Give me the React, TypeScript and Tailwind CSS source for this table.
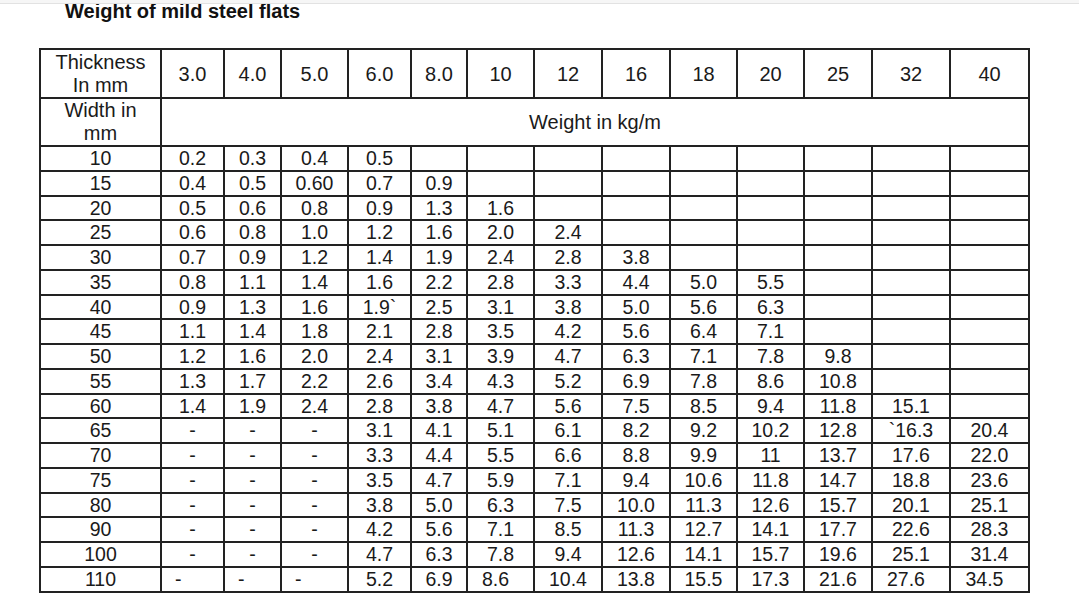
const thicknesses = ["3.0", "4.0", "5.0", "6.0", "8.0", "10", "12", "16", "18", "20", "25", "32", "40"]

const colWidths = [121, 63, 57, 67, 63, 56, 67, 68, 68, 67, 67, 68, 78, 79]

// width in mm -> weights per thickness (blank where the size isn't made)
const rows: [string, string[]][] = [
    ["10", ["0.2", "0.3", "0.4", "0.5"]],
    ["15", ["0.4", "0.5", "0.60", "0.7", "0.9"]],
    ["20", ["0.5", "0.6", "0.8", "0.9", "1.3", "1.6"]],
    ["25", ["0.6", "0.8", "1.0", "1.2", "1.6", "2.0", "2.4"]],
    ["30", ["0.7", "0.9", "1.2", "1.4", "1.9", "2.4", "2.8", "3.8"]],
    ["35", ["0.8", "1.1", "1.4", "1.6", "2.2", "2.8", "3.3", "4.4", "5.0", "5.5"]],
    ["40", ["0.9", "1.3", "1.6", "1.9`", "2.5", "3.1", "3.8", "5.0", "5.6", "6.3"]],
    ["45", ["1.1", "1.4", "1.8", "2.1", "2.8", "3.5", "4.2", "5.6", "6.4", "7.1"]],
    ["50", ["1.2", "1.6", "2.0", "2.4", "3.1", "3.9", "4.7", "6.3", "7.1", "7.8", "9.8"]],
    ["55", ["1.3", "1.7", "2.2", "2.6", "3.4", "4.3", "5.2", "6.9", "7.8", "8.6", "10.8"]],
    ["60", ["1.4", "1.9", "2.4", "2.8", "3.8", "4.7", "5.6", "7.5", "8.5", "9.4", "11.8", "15.1"]],
    ["65", ["-", "-", "-", "3.1", "4.1", "5.1", "6.1", "8.2", "9.2", "10.2", "12.8", "`16.3", "20.4"]],
    ["70", ["-", "-", "-", "3.3", "4.4", "5.5", "6.6", "8.8", "9.9", "11", "13.7", "17.6", "22.0"]],
    ["75", ["-", "-", "-", "3.5", "4.7", "5.9", "7.1", "9.4", "10.6", "11.8", "14.7", "18.8", "23.6"]],
    ["80", ["-", "-", "-", "3.8", "5.0", "6.3", "7.5", "10.0", "11.3", "12.6", "15.7", "20.1", "25.1"]],
    ["90", ["-", "-", "-", "4.2", "5.6", "7.1", "8.5", "11.3", "12.7", "14.1", "17.7", "22.6", "28.3"]],
    ["100", ["-", "-", "-", "4.7", "6.3", "7.8", "9.4", "12.6", "14.1", "15.7", "19.6", "25.1", "31.4"]],
    ["110", ["-", "-", "-", "5.2", "6.9", "8.6", "10.4", "13.8", "15.5", "17.3", "21.6", "27.6", "34.5"]],
]

// 18 rows share 446px, so some are a pixel shorter
const rowHeights = [25, 25, 24, 25, 25, 25, 24, 25, 25, 25, 24, 25, 25, 25, 24, 25, 25, 25]

const cell = "border-2 border-[#222] p-0 text-center whitespace-nowrap"

// the last row in the source sheet is typed a little off-centre
function lastRowClass(i: number) {
    if (i < 3) return "text-left pl-[13px]"
    if (i === 5 || i === 11 || i === 12) return "pr-[10px]"
    return ""
}

export default function App() {
    return (
        <div className="w-[1079px] h-[600px] bg-white overflow-hidden text-[#1a1a1a]" style={{ fontFamily: '"Liberation Sans", Arial, sans-serif' }}>
            <div className="h-[4px] bg-[#f6f6f6] border-b border-[#e2e2e2]" />

            {/* title is scrolled partly out of view */}
            <div className="h-[44px] overflow-hidden">
                <h1 className="-mt-[3px] ml-[65px] text-[20px] leading-[20px] font-bold text-[#111]">Weight of mild steel flats</h1>
            </div>

            <table className="ml-[39px] border-collapse table-fixed w-[991px] text-[19.5px]">
                <colgroup>
                    {colWidths.map((w, i) => (
                        <col key={i} style={{ width: w }} />
                    ))}
                </colgroup>
                <tbody>
                    <tr className="h-[49px] text-[20px]">
                        <td className={`${cell} leading-[23px]`}>Thickness<br />In mm</td>
                        {thicknesses.map((t) => (
                            <td key={t} className={cell}>{t}</td>
                        ))}
                    </tr>
                    <tr className="h-[48px] text-[20px]">
                        <td className={`${cell} leading-[23px]`}>Width in<br />mm</td>
                        <td colSpan={13} className={cell}>Weight in kg/m</td>
                    </tr>
                    {rows.map(([width, weights], r) => (
                        <tr key={width} style={{ height: rowHeights[r] }}>
                            <td className={`${cell} leading-[21px]`}>{width}</td>
                            {thicknesses.map((_, i) => (
                                <td key={i} className={`${cell} leading-[21px] ${r === rows.length - 1 ? lastRowClass(i) : ""}`}>
                                    {weights[i] ?? ""}
                                </td>
                            ))}
                        </tr>
                    ))}
                </tbody>
            </table>
        </div>
    )
}
